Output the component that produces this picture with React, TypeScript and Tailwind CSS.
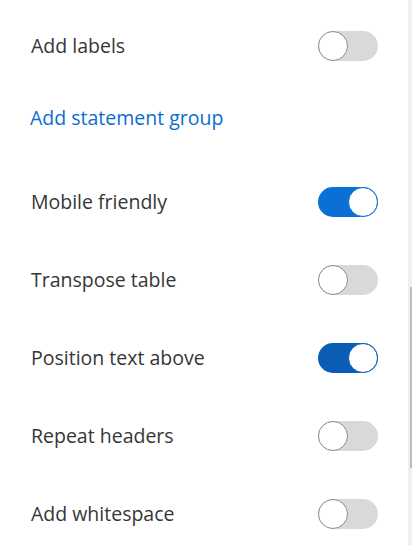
import React from "react";

type Row = { label: string; on: boolean; dark?: boolean };

function Toggle({ on, dark }: { on: boolean; dark?: boolean }) {
  if (on) {
    return (
      <div
        className={`flex h-[30px] w-[60px] items-center justify-end rounded-full ${
          dark ? "bg-[#0a5cb5]" : "bg-[#0b6fd8]"
        }`}
      >
        <div
          className={`h-[30px] w-[30px] rounded-full border bg-white ${
            dark ? "border-[#0a5cb5]" : "border-[#0b6fd8]"
          }`}
        />
      </div>
    );
  }
  return (
    <div className="flex h-[30px] w-[60px] items-center rounded-full bg-[#d9d9d9]">
      <div className="h-[30px] w-[30px] rounded-full border border-[#8c8c8c] bg-white" />
    </div>
  );
}

function SettingRow({ label, on, dark }: Row) {
  return (
    <div className="flex h-[78px] items-center justify-between">
      <span className="text-[19.5px] text-[#363636]">{label}</span>
      <Toggle on={on} dark={dark} />
    </div>
  );
}

const lower: Row[] = [
  { label: "Mobile friendly", on: true },
  { label: "Transpose table", on: false },
  { label: "Position text above", on: true, dark: true },
  { label: "Repeat headers", on: false },
  { label: "Add whitespace", on: false },
];

export default function App() {
  return (
    <div
      className="flex h-[545px] w-[412px] overflow-hidden bg-white"
      style={{ fontFamily: '"Open Sans", "Noto Sans", sans-serif' }}
    >
      <div className="flex-1 pl-[31px] pr-[30px] pt-[7px]">
        <SettingRow label="Add labels" on={false} />

        {/* link row */}
        <div className="mb-[12px] flex h-[66px] items-center">
          <span className="-ml-[1px] text-[19.5px] text-[#0a6ed1]">Add statement group</span>
        </div>

        {lower.map((r) => (
          <SettingRow key={r.label} {...r} />
        ))}
      </div>

      {/* scrollbar */}
      <div className="w-[4px] shrink-0 bg-[#efefef]">
        <div className="ml-[2px] mt-[287px] h-[181px] w-[2px] bg-[#bdbdbd]" />
      </div>
    </div>
  );
}
